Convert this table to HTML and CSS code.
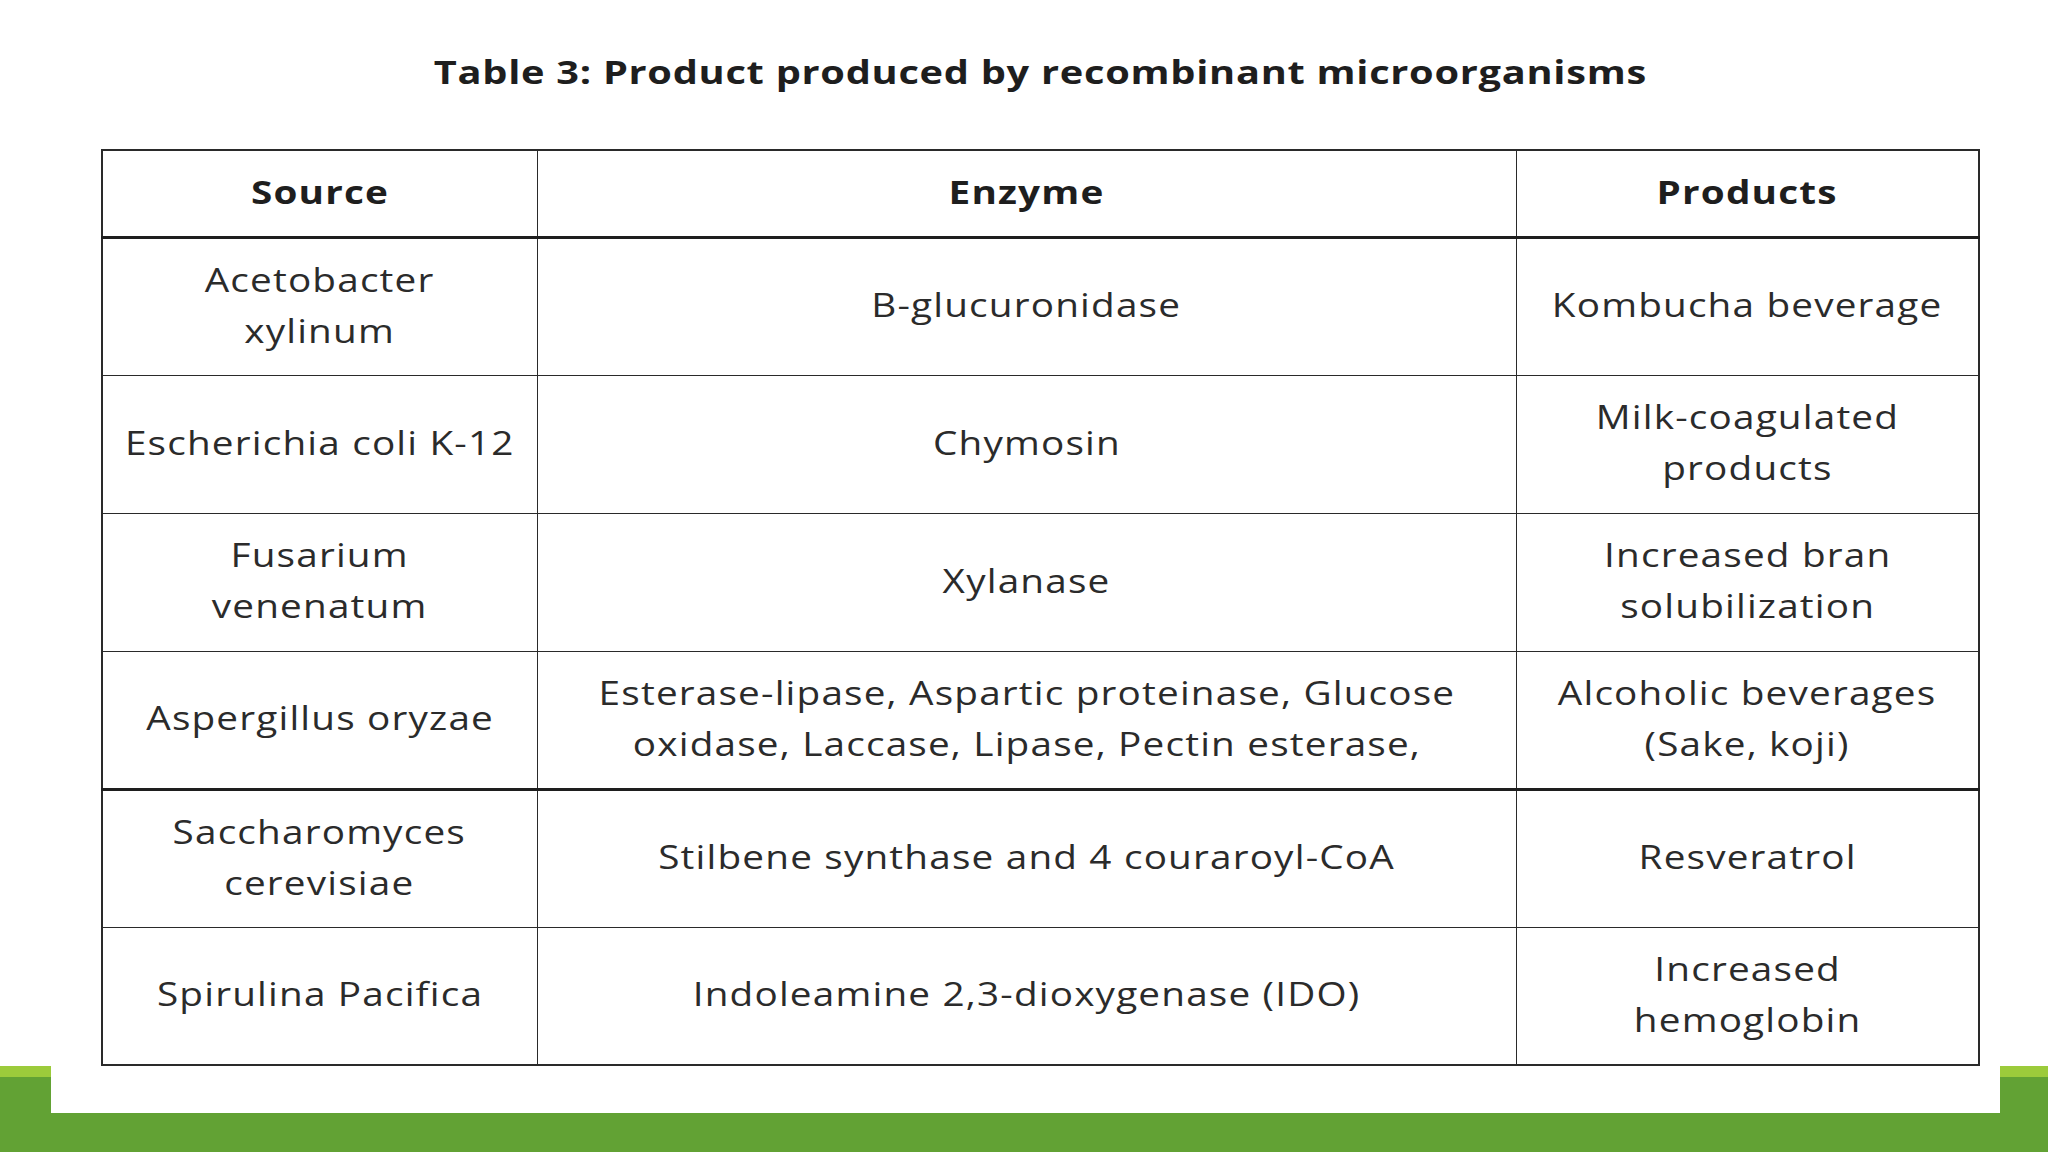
FILE: index.html
```html
<!DOCTYPE html>
<html>
<head>
<meta charset="utf-8">
<link rel="stylesheet" href="styles.css">
</head>
<body>
<div class="page">
  <h1 class="title"><span class="t tt">Table 3: Product produced by recombinant microorganisms</span></h1>
  <table class="data">
    <colgroup>
      <col class="c1"><col class="c2"><col class="c3">
    </colgroup>
    <thead>
      <tr class="head"><th><span class="t">Source</span></th><th><span class="t">Enzyme</span></th><th><span class="t">Products</span></th></tr>
    </thead>
    <tbody>
      <tr><td><span class="t">Acetobacter<br>xylinum</span></td><td><span class="t">B-glucuronidase</span></td><td><span class="t">Kombucha beverage</span></td></tr>
      <tr><td><span class="t">Escherichia coli K-12</span></td><td><span class="t">Chymosin</span></td><td><span class="t">Milk-coagulated<br>products</span></td></tr>
      <tr><td><span class="t">Fusarium<br>venenatum</span></td><td><span class="t">Xylanase</span></td><td><span class="t">Increased bran<br>solubilization</span></td></tr>
      <tr class="thick"><td><span class="t">Aspergillus oryzae</span></td><td><span class="t">Esterase-lipase, Aspartic proteinase, Glucose<br>oxidase, Laccase, Lipase, Pectin esterase,</span></td><td><span class="t">Alcoholic beverages<br>(Sake, koji)</span></td></tr>
      <tr><td><span class="t">Saccharomyces<br>cerevisiae</span></td><td><span class="t">Stilbene synthase and 4 couraroyl-CoA</span></td><td><span class="t">Resveratrol</span></td></tr>
      <tr><td><span class="t">Spirulina Pacifica</span></td><td><span class="t">Indoleamine 2,3-dioxygenase (IDO)</span></td><td><span class="t">Increased<br>hemoglobin</span></td></tr>
    </tbody>
  </table>
  <div class="footer">
    <div class="tabs">
      <div class="tab left"></div>
      <div class="tab right"></div>
    </div>
    <div class="bar"></div>
  </div>
</div>
</body>
</html>
```
FILE: styles.css
```css
html, body {
  margin: 0;
  padding: 0;
  background: #ffffff;
}
.page {
  width: 2048px;
  height: 1152px;
  display: flex;
  flex-direction: column;
  font-family: "Open Sans", "Noto Sans", sans-serif;
  color: #2b2b2b;
  overflow: hidden;
}
.t {
  display: inline-block;
  transform: scaleX(1.19);
  transform-origin: center;
}
.t.tt {
  transform: scaleX(1.205);
}
.title {
  margin: 0;
  padding: 50px 0 0 102px;
  width: 1876px;
  text-align: center;
  font-size: 33px;
  line-height: 44px;
  font-weight: 700;
  color: #1e1e1e;
  letter-spacing: 0.6px;
}
.data {
  margin: 55px 0 0 101px;
  width: 1877px;
  border-collapse: collapse;
  table-layout: fixed;
  border: 2px solid #2a2a2a;
}
.c1 { width: 435px; }
.c2 { width: 979px; }
.c3 { width: 463px; }
.data th, .data td {
  border: 1.5px solid #2a2a2a;
  text-align: center;
  vertical-align: middle;
  padding: 0 10px 4px;
  font-size: 32.5px;
  line-height: 51px;
  letter-spacing: 1px;
}
.data th {
  font-weight: 700;
  color: #1e1e1e;
}
.data td {
  font-weight: 400;
  color: #2b2b2b;
}
.head { height: 87px; }
.head th { border-bottom: 3px solid #1e1e1e; }
.data tbody tr { height: 138px; }
.data tbody tr.thick td { border-bottom: 3px solid #1e1e1e; }
.footer {
  margin-top: auto;
  height: 89px;
  display: flex;
  flex-direction: column;
}
.tabs {
  height: 47px;
  display: flex;
  justify-content: space-between;
}
.tab {
  box-sizing: border-box;
  height: 47px;
  background: #62a234;
  border-top: 11px solid #9ccb3b;
}
.tab.left { width: 51px; }
.tab.right { width: 48px; }
.bar {
  height: 42px;
  background: #62a234;
}
```
